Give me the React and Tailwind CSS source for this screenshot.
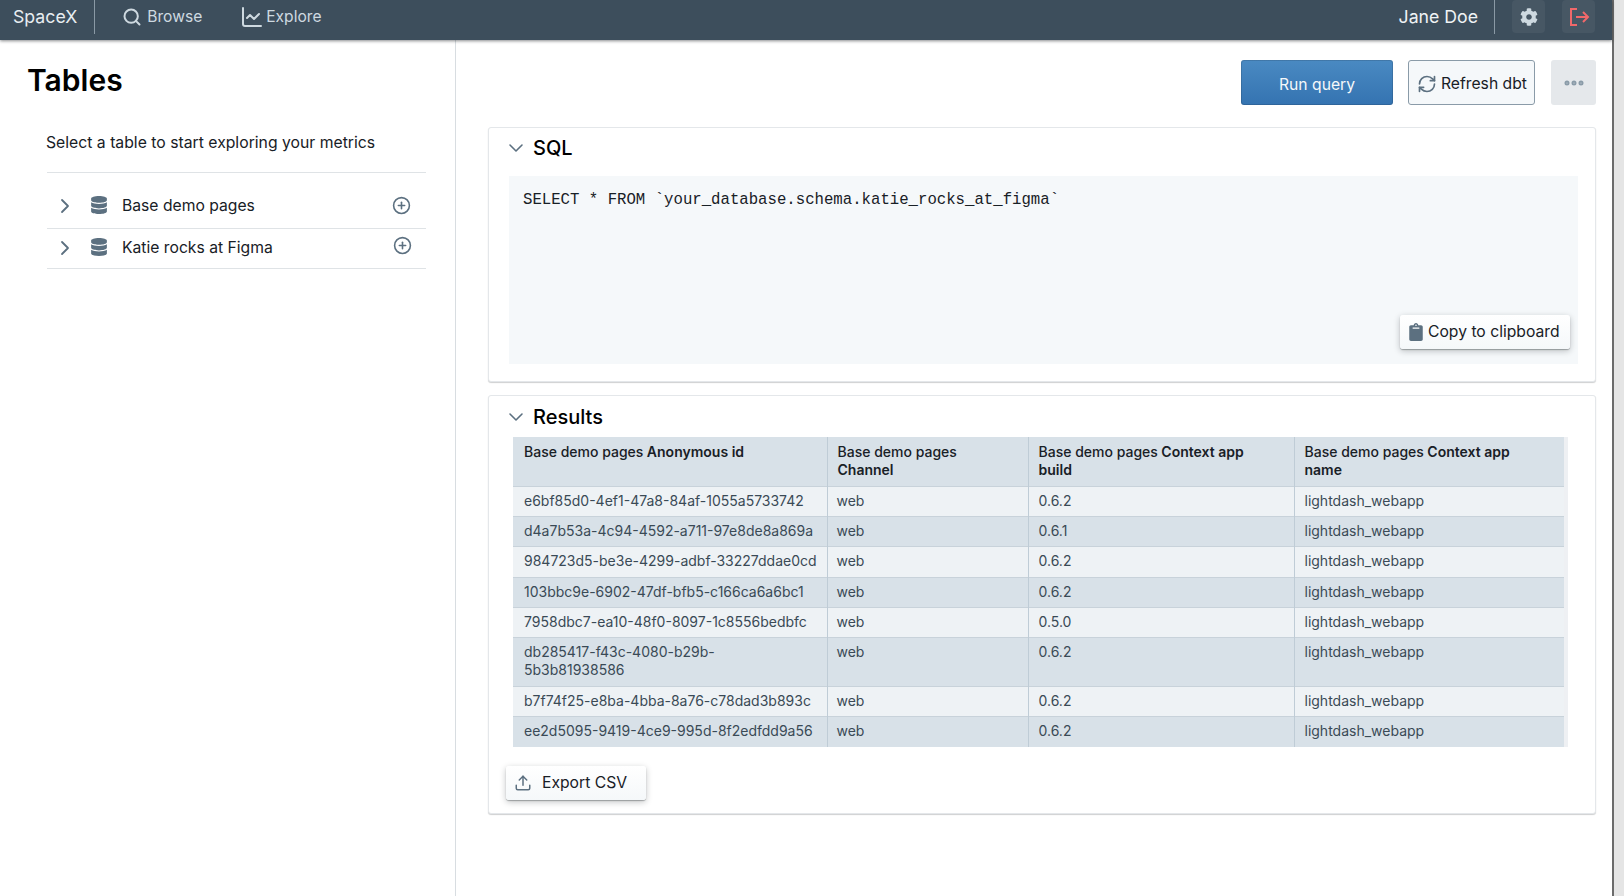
import { ChevronDown, ChevronRight, CirclePlus, Search, ChartLine, RefreshCw, Ellipsis, Upload } from 'lucide-react';
import { FaCog, FaDatabase, FaClipboard } from 'react-icons/fa';

const ROWS = [
  ['e6bf85d0-4ef1-47a8-84af-1055a5733742', 'web', '0.6.2', 'pb-[6px]'],
  ['d4a7b53a-4c94-4592-a711-97e8de8a869a', 'web', '0.6.1', 'pb-[6px]'],
  ['984723d5-be3e-4299-adbf-33227ddae0cd', 'web', '0.6.2', 'pb-[7px]'],
  ['103bbc9e-6902-47df-bfb5-c166ca6a6bc1', 'web', '0.6.2', 'pb-[6px]'],
  ['7958dbc7-ea10-48f0-8097-1c8556bedbfc', 'web', '0.5.0', 'pb-[6px]'],
  ['db285417-f43c-4080-b29b-\n5b3b81938586', 'web', '0.6.2', 'pb-[7px]'],
  ['b7f74f25-e8ba-4bba-8a76-c78dad3b893c', 'web', '0.6.2', 'pb-[6px]'],
  ['ee2d5095-9419-4ce9-995d-8f2edfdd9a56', 'web', '0.6.2', 'pb-[7px]'],
];

function TableRow({ label, className, plusClassName }) {
  return (
    <div className={`flex items-center pl-[6px] pr-[15px] border-b border-[#dfe3e6] ${className}`}>
      <ChevronRight className="w-6 h-6 text-[#5c7080]" strokeWidth={1.8} />
      <FaDatabase className="w-[16px] h-[18px] ml-[14px] mb-[2px] text-[#5c7080]" />
      <span className="ml-[15px] text-[15.7px] text-[#182026] flex-1">{label}</span>
      <CirclePlus className={`w-[19px] h-[19px] text-[#5c7080] ${plusClassName}`} strokeWidth={2} />
    </div>
  );
}

function SectionHeader({ title, className }) {
  return (
    <div className={`flex items-center pl-[15px] ${className}`}>
      <ChevronDown className="w-6 h-6 text-[#5c7080]" strokeWidth={1.6} />
      <h2 className="ml-[5px] text-[20px] font-medium text-black">{title}</h2>
    </div>
  );
}

// second line of the header wraps by hand so the columns break where the design does
function HeaderCell({ bold, wrapped, className }) {
  return (
    <th className={`pt-[6px] pb-[7px] align-top text-left font-semibold text-[14px] leading-[18px] text-[#182026] ${className}`}>
      <div>
        <span className="font-medium">Base demo pages</span> {bold}
      </div>
      {wrapped && <div>{wrapped}</div>}
    </th>
  );
}

export default function App() {
  return (
    <div className="h-[896px] w-[1624px] overflow-hidden flex bg-[#e5e5e5] font-['Inter',sans-serif]">
      <div className="w-[1612px] h-full bg-white flex flex-col border-r-2 border-[#6b6b6b] box-content">
        {/* Top nav */}
        <nav className="h-[40px] shrink-0 bg-[#3d4e5c] flex items-start shadow-[0_1px_3px_rgba(16,22,26,0.5)] relative z-10 text-[#e8edf1]">
          <span className="ml-[13px] text-[17.7px] leading-[34px]">SpaceX</span>
          <div className="ml-[17px] h-[34px] w-px bg-[#8a99a5]" />
          <div className="ml-[27px] h-[34px] flex items-center text-[#ced9e0]">
            <Search className="w-[20px] h-[20px]" strokeWidth={2.4} />
            <span className="ml-[5px] text-[15.6px]">Browse</span>
          </div>
          <div className="ml-[38px] h-[34px] flex items-center text-[#ced9e0]">
            <ChartLine className="w-6 h-6" strokeWidth={2} />
            <span className="ml-[2px] text-[15.6px]">Explore</span>
          </div>
          <div className="ml-auto flex items-start">
            <span className="text-[17.7px] leading-[34px] text-[#f0f3f5]">Jane Doe</span>
            <div className="ml-[16px] h-[34px] w-px bg-[#8a99a5]" />
            <div className="ml-[17px] w-[33px] h-[33px] rounded bg-[#475764] flex items-center justify-center">
              <FaCog className="w-[18px] h-[18px] text-[#ced9e0]" />
            </div>
            <div className="ml-[17px] mr-[17px] w-[33px] h-[33px] rounded bg-[#475764] flex items-center justify-center">
              <svg viewBox="0 0 24 24" className="w-6 h-6 text-[#f0686a]" fill="none" stroke="currentColor" strokeWidth="2">
                <path d="M10 4H4v16h6" />
                <path d="M9 12h12M16 7l5 5-5 5" />
              </svg>
            </div>
          </div>
        </nav>

        <div className="flex flex-1 min-h-0">
          {/* Sidebar */}
          <aside className="w-[456px] shrink-0 border-r border-[#d8dde1] pl-[27px] pr-[29px]">
            <h1 className="mt-[20px] text-[30px] leading-[40px] font-semibold text-black">Tables</h1>
            <p className="mt-[31px] ml-[19px] text-[15.75px] leading-[24px] text-[#182026]">Select a table to start exploring your metrics</p>
            <div className="mt-[17px] ml-[20px] border-t border-[#dfe3e6]">
              <TableRow label="Base demo pages" className="h-[56px] pt-[10px]" />
              <TableRow label="Katie rocks at Figma" className="h-[40px] pb-[2px]" plusClassName="mb-[4px] translate-x-[1px]" />
            </div>
          </aside>

          {/* Main */}
          <main className="flex-1 pl-[32px] pr-[16px] pt-[20px]">
            <div className="flex justify-end gap-[15px] h-[45px]">
              <button className="w-[152px] pt-[5px] rounded-[3px] bg-gradient-to-b from-[#4a8ac2] to-[#3473b1] text-[#f5f8fa] text-[15.7px] shadow-[inset_0_0_0_1px_rgba(16,22,26,0.15)]">Run query</button>
              <div className="flex gap-[16px]">
                <button className="w-[127px] pt-[2px] rounded-[3px] bg-[#f5f8fa] border border-[#8a9ba8] text-[#182026] text-[15.7px] flex items-center pl-[8px] gap-[4px]">
                  <RefreshCw className="w-[20px] h-[20px] text-[#5c7080]" strokeWidth={2} />
                  Refresh dbt
                </button>
                <button className="w-[45px] rounded-[3px] bg-[#e5e8eb] flex items-center justify-center">
                  <Ellipsis className="w-6 h-6 text-[#8a9ba8]" strokeWidth={3} />
                </button>
              </div>
            </div>

            {/* SQL card */}
            <section className="mt-[22px] h-[255px] rounded-[3px] border border-[#e4e7ea] shadow-[0_1px_1px_rgba(16,22,26,0.2)] bg-white">
              <SectionHeader title="SQL" className="h-[40px]" />
              <div className="relative ml-[20px] mr-[17px] mt-[8px] h-[188px] bg-[#f5f8fa] px-[14px] pt-[15px] font-['Liberation_Mono',monospace] text-[15.68px] leading-[18px] text-[#182026]">
                SELECT * FROM `your_database.schema.katie_rocks_at_figma`
                <button className="absolute right-[8px] bottom-[15px] w-[170px] h-[34px] rounded-[3px] bg-gradient-to-b from-white to-[#f5f8fa] shadow-[0_1px_1px_rgba(16,22,26,0.3),0_2px_6px_rgba(16,22,26,0.25)] flex items-center pb-[1px] pl-[9px] font-['Inter',sans-serif] text-[15.7px] text-[#182026]">
                  <FaClipboard className="w-[14px] h-[18px] text-[#5c7080]" />
                  <span className="ml-[5px]">Copy to clipboard</span>
                </button>
              </div>
            </section>

            {/* Results card */}
            <section className="mt-[13px] h-[419px] rounded-[3px] border border-[#e4e7ea] shadow-[0_1px_1px_rgba(16,22,26,0.2)] bg-white pt-[1px]">
              <SectionHeader title="Results" className="h-[40px]" />
              <div className="ml-[24px] mr-[27px] border-r-[4px] border-[#eef0f3]">
                <table className="w-full table-fixed border-collapse">
                  <colgroup>
                    <col className="w-[314px]" />
                    <col className="w-[201px]" />
                    <col className="w-[266px]" />
                    <col />
                  </colgroup>
                  <thead>
                    <tr className="bg-[#d8e1e8]">
                      <HeaderCell bold="Anonymous id" className="pl-[11px] pr-[8px] border-r border-[#bfccd6]" />
                      <HeaderCell wrapped="Channel" className="pl-[10px] pr-[11px] border-r border-[#bfccd6]" />
                      <HeaderCell bold="Context app" wrapped="build" className="px-[10px] border-r border-[#bfccd6]" />
                      <HeaderCell bold="Context app" wrapped="name" className="px-[10px]" />
                    </tr>
                  </thead>
                  <tbody>
                    {ROWS.map((row, i) => (
                      <tr key={row[0]} className={`text-[14px] leading-[18px] text-[#3a4a56] border-t border-[#c8d2da] ${i % 2 === 0 ? 'bg-[#eef2f5]' : 'bg-[#d8e1e8]'}`}>
                        <td className={`pl-[11px] pt-[5px] align-top whitespace-pre border-r border-[#bfccd6] ${row[3]}`}>{row[0]}</td>
                        <td className="pl-[9px] pt-[5px] pb-[6px] align-top border-r border-[#bfccd6]">{row[1]}</td>
                        <td className="pl-[10px] pt-[5px] pb-[6px] align-top border-r border-[#bfccd6]">{row[2]}</td>
                        <td className="pl-[10px] pt-[5px] pb-[6px] align-top">lightdash_webapp</td>
                      </tr>
                    ))}
                  </tbody>
                </table>
              </div>
              <button className="ml-[17px] mt-[19px] w-[140px] h-[34px] rounded-[3px] bg-gradient-to-b from-white to-[#f5f8fa] shadow-[0_1px_1px_rgba(16,22,26,0.3),0_2px_6px_rgba(16,22,26,0.25)] flex items-center pl-[8px] text-[15.7px] text-[#182026]">
                <Upload className="w-[18px] h-[18px] text-[#5c7080]" strokeWidth={2} />
                <span className="ml-[10px]">Export CSV</span>
              </button>
            </section>
          </main>
        </div>
      </div>
    </div>
  );
}
